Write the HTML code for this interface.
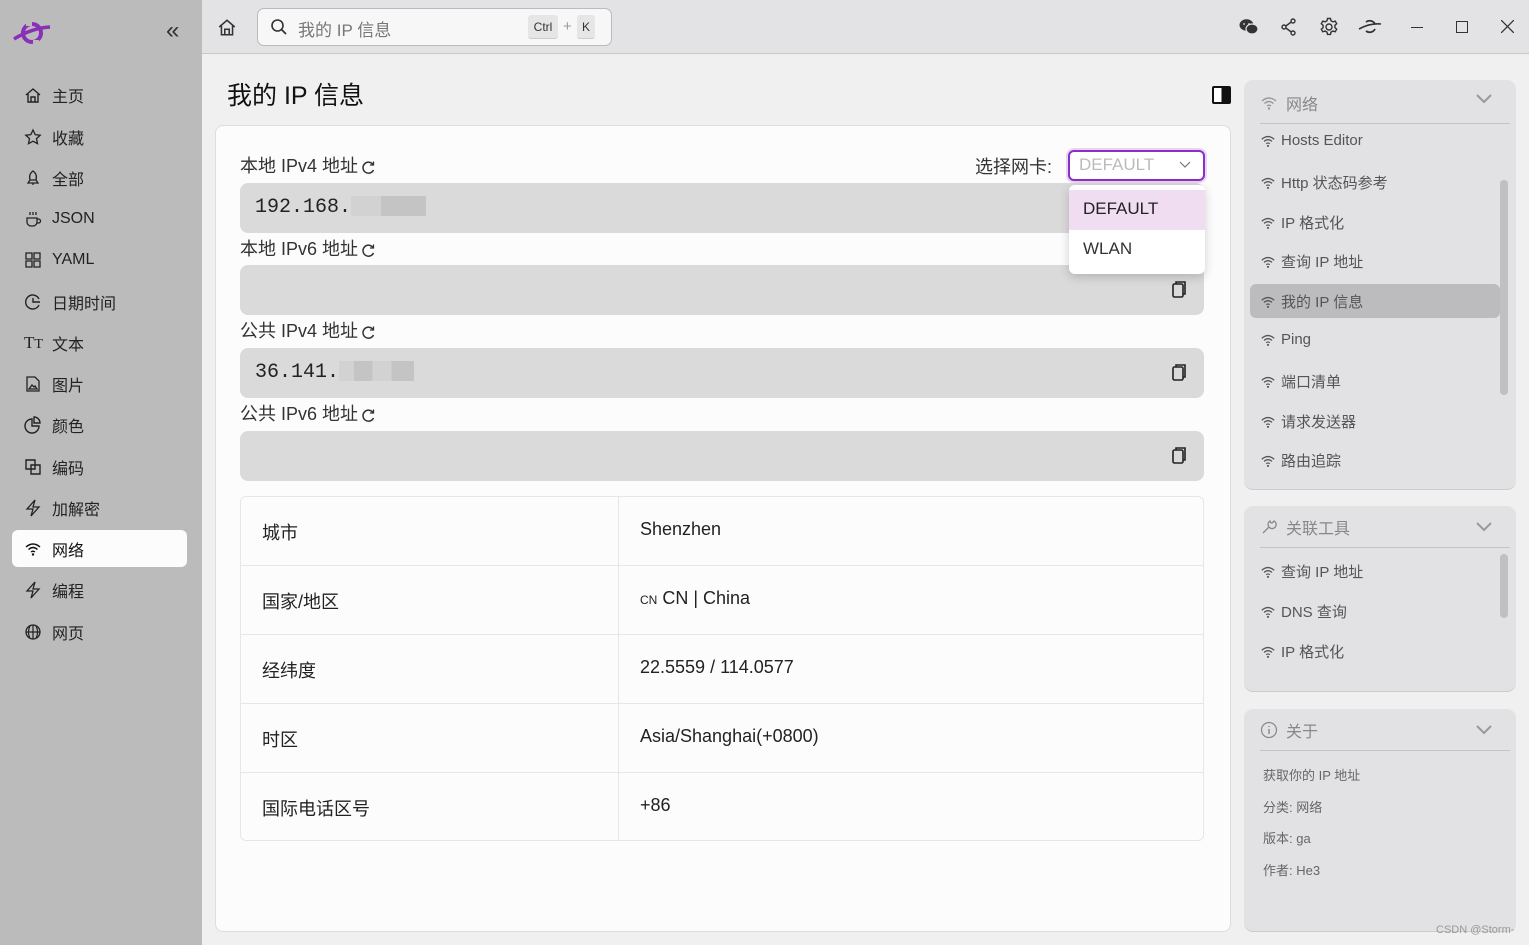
<!DOCTYPE html>
<html><head><meta charset="utf-8"><style>
*{box-sizing:border-box;margin:0;padding:0}
body{width:1529px;height:945px;overflow:hidden;background:#f0f0f0;font-family:"Liberation Sans","Noto Sans CJK SC",sans-serif;color:#222;position:relative}
.abs{position:absolute}
.side{left:0;top:0;width:202px;height:945px;background:#bbbbbb}
.nav{position:absolute;left:24px;font-size:16px;color:#222;display:flex;align-items:center;gap:10px;height:20px}
.nav svg{width:18px;height:18px}
.top{left:202px;top:0;width:1327px;height:54px;background:#e3e3e5;border-bottom:1px solid #c8c8c8}
.search{left:257px;top:8px;width:355px;height:38px;background:#f7f7f8;border:1px solid #bbb;border-radius:7px}
.card{left:215px;top:125px;width:1016px;height:807px;background:#fcfcfd;border:1px solid #ddd;border-radius:8px}
.lbl{position:absolute;font-size:18px;color:#333}
.rf{display:inline-block;width:14px;height:14px;vertical-align:-2px;margin-left:3px}
.inp{position:absolute;left:240px;width:964px;height:50px;background:#dadada;border-radius:8px;font-family:"Liberation Mono",monospace;font-size:20px;padding:13px 0 0 15px;color:#222}
.copy{position:absolute;right:16px;top:14px}
.tbl{left:240px;top:496px;width:964px;height:345px;border:1px solid #e6e6e6;border-radius:6px;background:#fcfcfd}
.row{position:absolute;left:0;width:962px;height:69px;border-bottom:1px solid #e6e6e6;font-size:18px}
.row span{position:absolute;top:22px}
.box{position:absolute;left:1244px;width:272px;background:#e2e2e4;border-radius:9px;border-bottom:1px solid #ccc}
.bh{position:absolute;left:16px;width:250px;height:42px;border-bottom:1px solid #c4c4c4;font-size:16px;color:#888;display:flex;align-items:center;gap:8px;padding-left:0}
.it{position:absolute;left:16px;font-size:15px;color:#555;display:flex;align-items:center;gap:5px}
.ab{position:absolute;left:19px;font-size:13px;color:#666}
.chev{position:absolute;right:24px;top:14px}
</style></head><body>
<div class="abs side"></div>
<svg class="abs" style="left:12px;top:18px" width="40" height="30" viewBox="0 0 40 30"><ellipse cx="20" cy="15" rx="9" ry="9" fill="none" stroke="#8a2fb8" stroke-width="4"/><path d="M2 21 Q20 10 38 9" stroke="#8a2fb8" stroke-width="3.5" fill="none"/><rect x="14" y="3" width="6" height="5" fill="#bbb"/><rect x="21" y="22" width="6" height="5" fill="#bbb"/></svg>
<div class="abs" style="left:166px;top:17px;font-size:24px;color:#333">«</div>
<svg width="0" height="0" style="position:absolute"><defs>
<g id="wifi"><path d="M2 7 Q9 1 16 7 M4.5 9.5 Q9 5.5 13.5 9.5 M7 12 Q9 10.5 11 12" fill="none" stroke="currentColor" stroke-width="1.4"/><circle cx="9" cy="14.5" r="1.2" fill="currentColor"/></g>
<g id="copy"><rect x="4" y="5" width="10" height="13" rx="1.5" fill="none" stroke="#222" stroke-width="1.6"/><path d="M7 5V3h9v12h-2" fill="none" stroke="#222" stroke-width="1.6"/></g>
<g id="rf"><path d="M12 4.5A5.5 5.5 0 1 0 12.5 10" fill="none" stroke="#333" stroke-width="1.5"/><path d="M12.5 1.5v3.5H9" fill="none" stroke="#333" stroke-width="1.3"/></g>
</defs></svg>
<div class="nav" style="top:85px"><svg viewBox="0 0 18 18"><path d="M2 9L9 3l7 6M4 8v8h10V8M7 16v-5h4v5" fill="none" stroke="#222" stroke-width="1.4"/></svg>主页</div>
<div class="nav" style="top:127px"><svg viewBox="0 0 18 18"><path d="M9 2l2.2 4.6 5 .6-3.7 3.4 1 5L9 13.2 4.5 15.6l1-5L1.8 7.2l5-.6z" fill="none" stroke="#222" stroke-width="1.3"/></svg>收藏</div>
<div class="nav" style="top:168px"><svg viewBox="0 0 18 18"><path d="M9 2c3 2 4 5 3 9H6C5 7 6 4 9 2zM6 11l-2 3h10l-2-3M9 14v2" fill="none" stroke="#222" stroke-width="1.3"/></svg>全部</div>
<div class="nav" style="top:209px"><svg viewBox="0 0 18 18"><path d="M3 8h10v4a4 4 0 01-4 4H7a4 4 0 01-4-4zM13 9h1.5a2 2 0 010 4H13M6 2v3M9 2v3M12 2v3" fill="none" stroke="#222" stroke-width="1.3"/></svg>JSON</div>
<div class="nav" style="top:250px"><svg viewBox="0 0 18 18"><path d="M2 2h6v6H2zM10 2h6v6h-6zM2 10h6v6H2zM10 10h6v6h-6z" fill="none" stroke="#222" stroke-width="1.3"/></svg>YAML</div>
<div class="nav" style="top:292px"><svg viewBox="0 0 18 18"><path d="M15 6A7 7 0 1015 12M9 5v4h7" fill="none" stroke="#222" stroke-width="1.4"/></svg>日期时间</div>
<div class="nav" style="top:333px"><span style="font-family:'Liberation Serif',serif;font-size:17px;width:18px">T<small>T</small></span>文本</div>
<div class="nav" style="top:374px"><svg viewBox="0 0 18 18"><path d="M3 2h8l4 4v10H3zM5 14l3-4 2 2 1-1 2 3z" fill="none" stroke="#222" stroke-width="1.3"/></svg>图片</div>
<div class="nav" style="top:415px"><svg viewBox="0 0 18 18"><path d="M8 3a7 7 0 107 7H8zM10 1v6h6a6 6 0 00-6-6z" fill="none" stroke="#222" stroke-width="1.4"/></svg>颜色</div>
<div class="nav" style="top:457px"><svg viewBox="0 0 18 18"><path d="M2 2h9v9H2zM7 7h9v9H7z" fill="none" stroke="#222" stroke-width="1.4"/></svg>编码</div>
<div class="nav" style="top:498px"><svg viewBox="0 0 18 18"><path d="M11 1L3 10h6l-2 7 8-9H9z" fill="none" stroke="#222" stroke-width="1.3"/></svg>加解密</div>
<div class="abs" style="left:12px;top:530px;width:175px;height:37px;background:#fcfcfd;border-radius:6px"></div>
<div class="nav" style="top:539px;color:#111"><svg viewBox="0 0 18 18" style="color:#111"><use href="#wifi"/></svg>网络</div>
<div class="nav" style="top:580px"><svg viewBox="0 0 18 18"><path d="M11 1L3 10h6l-2 7 8-9H9z" fill="none" stroke="#222" stroke-width="1.3"/></svg>编程</div>
<div class="nav" style="top:622px"><svg viewBox="0 0 18 18"><circle cx="9" cy="9" r="7" fill="none" stroke="#222" stroke-width="1.3"/><path d="M2 9h14M9 2v14M6 2.8c-2 4-2 8.4 0 12.4M12 2.8c2 4 2 8.4 0 12.4" fill="none" stroke="#222" stroke-width="1.2"/></svg>网页</div>

<div class="abs top"></div>
<svg class="abs" style="left:217px;top:17px" width="20" height="20" viewBox="0 0 18 18"><path d="M2 9L9 3l7 6M4 8v8h10V8M7 16v-5h4v5" fill="none" stroke="#333" stroke-width="1.4"/></svg>
<div class="abs search"></div>
<svg class="abs" style="left:270px;top:18px" width="18" height="18" viewBox="0 0 18 18"><circle cx="7.5" cy="7.5" r="5.5" fill="none" stroke="#333" stroke-width="1.6"/><path d="M11.5 11.5L16 16" stroke="#333" stroke-width="1.8"/></svg>
<div class="abs" style="left:298px;top:16px;font-size:17px;color:#777">我的 IP 信息</div>
<div class="abs" style="left:528px;top:15px;width:30px;height:24px;background:#e6e6e6;border-radius:3px;font-size:12px;color:#333;text-align:center;line-height:24px;border-bottom:1px solid #ccc">Ctrl</div>
<div class="abs" style="left:563px;top:18px;font-size:15px;color:#999">+</div>
<div class="abs" style="left:577px;top:15px;width:18px;height:24px;background:#e6e6e6;border-radius:3px;font-size:12px;color:#333;text-align:center;line-height:24px;border-bottom:1px solid #ccc">K</div>
<svg class="abs" style="left:1239px;top:18px" width="20" height="18" viewBox="0 0 20 18"><ellipse cx="7.5" cy="7" rx="7" ry="5.7" fill="#333"/><ellipse cx="13" cy="11" rx="6" ry="5" fill="#333" stroke="#e3e3e5" stroke-width="1.2"/><circle cx="5" cy="6" r=".9" fill="#e3e3e5"/><circle cx="10" cy="6" r=".9" fill="#e3e3e5"/></svg>
<svg class="abs" style="left:1281px;top:18px" width="16" height="18" viewBox="0 0 16 18"><circle cx="12" cy="3" r="2" fill="none" stroke="#333" stroke-width="1.4"/><circle cx="3" cy="9" r="2" fill="none" stroke="#333" stroke-width="1.4"/><circle cx="12" cy="15" r="2" fill="none" stroke="#333" stroke-width="1.4"/><path d="M4.8 8l5.5-4M4.8 10l5.5 4" stroke="#333" stroke-width="1.4"/></svg>
<svg class="abs" style="left:1319px;top:17px" width="20" height="20" viewBox="0 0 20 20"><path d="M8.5 1.5h3l.5 2.3 2 1.1 2.2-.8 1.5 2.6-1.8 1.6v2.3l1.8 1.6-1.5 2.6-2.2-.8-2 1.1-.5 2.3h-3l-.5-2.3-2-1.1-2.2.8-1.5-2.6 1.8-1.6V8.3L2.3 6.7l1.5-2.6 2.2.8 2-1.1z" fill="none" stroke="#333" stroke-width="1.4"/><circle cx="10" cy="10" r="3" fill="none" stroke="#333" stroke-width="1.4"/></svg>
<svg class="abs" style="left:1358px;top:18px" width="24" height="18" viewBox="0 0 24 18"><path d="M1 11Q12 5 23 6" stroke="#333" stroke-width="1.6" fill="none"/><path d="M8 4a6 6 0 019 2M17 11a6 6 0 01-9 2" stroke="#333" stroke-width="1.8" fill="none"/></svg>
<div class="abs" style="left:1411px;top:27px;width:12px;height:1.3px;background:#333"></div>
<div class="abs" style="left:1456px;top:21px;width:12px;height:12px;border:1.3px solid #333"></div>
<svg class="abs" style="left:1501px;top:20px" width="13" height="13"><path d="M0 0L13 13M13 0L0 13" stroke="#333" stroke-width="1.3"/></svg>

<div class="abs" style="left:227px;top:76px;font-size:25px;color:#111">我的 IP 信息</div>
<div class="abs" style="left:1212px;top:86px;width:19px;height:18px;border:2px solid #111;border-radius:2px;background:linear-gradient(90deg,#fff 50%,#111 50%)"></div>

<div class="abs card"></div>
<div class="lbl" style="left:240px;top:152px">本地 IPv4 地址<svg class="rf" viewBox="0 0 14 14"><use href="#rf"/></svg></div>
<div class="inp" style="top:183px">192.168.<span style="display:inline-block;width:75px;height:20px;background:linear-gradient(90deg,#d2d2d2 40%,#c4c4c4 40%);vertical-align:-4px"></span></div>
<div class="lbl" style="left:240px;top:235px">本地 IPv6 地址<svg class="rf" viewBox="0 0 14 14"><use href="#rf"/></svg></div>
<div class="inp" style="top:265px"><svg class="copy" width="20" height="20" viewBox="0 0 18 20"><use href="#copy"/></svg></div>
<div class="lbl" style="left:240px;top:317px">公共 IPv4 地址<svg class="rf" viewBox="0 0 14 14"><use href="#rf"/></svg></div>
<div class="inp" style="top:348px">36.141.<span style="display:inline-block;width:75px;height:20px;background:linear-gradient(90deg,#d2d2d2 20%,#c4c4c4 20%,#c4c4c4 45%,#d2d2d2 45%,#d2d2d2 70%,#c4c4c4 70%);vertical-align:-4px"></span><svg class="copy" width="20" height="20" viewBox="0 0 18 20"><use href="#copy"/></svg></div>
<div class="lbl" style="left:240px;top:400px">公共 IPv6 地址<svg class="rf" viewBox="0 0 14 14"><use href="#rf"/></svg></div>
<div class="inp" style="top:431px"><svg class="copy" width="20" height="20" viewBox="0 0 18 20"><use href="#copy"/></svg></div>

<div class="lbl" style="left:975px;top:153px">选择网卡:</div>
<div class="abs" style="left:1068px;top:150px;width:137px;height:31px;border:2px solid #8a2fc8;border-radius:6px;background:#fff;box-shadow:0 0 0 2px #e6d6f2;font-size:17px;color:#bbb;padding:3px 0 0 9px">DEFAULT<svg style="position:absolute;right:12px;top:9px" width="12" height="8"><path d="M1 1l5 5 5-5" fill="none" stroke="#777" stroke-width="1.2"/></svg></div>
<div class="abs" style="left:1069px;top:185px;width:136px;height:89px;background:#fff;border-radius:6px;box-shadow:0 3px 10px rgba(0,0,0,.18);overflow:hidden">
<div style="margin-top:5px;height:40px;background:#f0ddf1;font-size:17px;color:#222;padding:9px 0 0 14px">DEFAULT</div>
<div style="height:40px;font-size:17px;color:#333;padding:9px 0 0 14px">WLAN</div></div>

<div class="abs tbl">
<div class="row" style="top:0"><span style="left:21px">城市</span><span style="left:399px">Shenzhen</span></div>
<div class="row" style="top:69px"><span style="left:21px">国家/地区</span><span style="left:399px"><small style="font-size:12px">CN</small> CN | China</span></div>
<div class="row" style="top:138px"><span style="left:21px">经纬度</span><span style="left:399px">22.5559 / 114.0577</span></div>
<div class="row" style="top:207px"><span style="left:21px">时区</span><span style="left:399px">Asia/Shanghai(+0800)</span></div>
<div class="row" style="top:276px;border-bottom:none"><span style="left:21px">国际电话区号</span><span style="left:399px">+86</span></div>
<div style="position:absolute;left:377px;top:0;width:1px;height:343px;background:#e6e6e6"></div>
</div>

<div class="box" style="top:80px;height:410px">
<div class="bh" style="top:2px"><svg width="18" height="18" viewBox="0 0 18 18" style="color:#999"><use href="#wifi"/></svg> 网络</div>
<svg class="chev" width="16" height="10"><path d="M1 1l7 7 7-7" fill="none" stroke="#999" stroke-width="2"/></svg>
<div style="position:absolute;left:6px;top:204px;width:250px;height:34px;background:#bcbcbe;border-radius:6px"></div>
<div style="position:absolute;left:256px;top:100px;width:8px;height:215px;background:#c0c0c0;border-radius:4px"></div>
</div>
<div class="it" style="left:1260px;top:132px"><svg width="16" height="16" viewBox="0 0 18 18" style="color:#555"><use href="#wifi"/></svg>Hosts Editor</div>
<div class="it" style="left:1260px;top:172px"><svg width="16" height="16" viewBox="0 0 18 18" style="color:#555"><use href="#wifi"/></svg>Http 状态码参考</div>
<div class="it" style="left:1260px;top:212px"><svg width="16" height="16" viewBox="0 0 18 18" style="color:#555"><use href="#wifi"/></svg>IP 格式化</div>
<div class="it" style="left:1260px;top:251px"><svg width="16" height="16" viewBox="0 0 18 18" style="color:#555"><use href="#wifi"/></svg>查询 IP 地址</div>
<div class="it" style="left:1260px;top:291px"><svg width="16" height="16" viewBox="0 0 18 18" style="color:#555"><use href="#wifi"/></svg>我的 IP 信息</div>
<div class="it" style="left:1260px;top:331px"><svg width="16" height="16" viewBox="0 0 18 18" style="color:#555"><use href="#wifi"/></svg>Ping</div>
<div class="it" style="left:1260px;top:371px"><svg width="16" height="16" viewBox="0 0 18 18" style="color:#555"><use href="#wifi"/></svg>端口清单</div>
<div class="it" style="left:1260px;top:411px"><svg width="16" height="16" viewBox="0 0 18 18" style="color:#555"><use href="#wifi"/></svg>请求发送器</div>
<div class="it" style="left:1260px;top:450px"><svg width="16" height="16" viewBox="0 0 18 18" style="color:#555"><use href="#wifi"/></svg>路由追踪</div>

<div class="box" style="top:506px;height:186px">
<div class="bh" style="top:0"><svg width="18" height="18" viewBox="0 0 18 18"><path d="M3 15l6-6M9 9a4 4 0 105-6l-2 2-1.5-.5L10 3a4 4 0 00-1 6z" fill="none" stroke="#888" stroke-width="1.3"/></svg> 关联工具</div>
<svg class="chev" style="top:16px" width="16" height="10"><path d="M1 1l7 7 7-7" fill="none" stroke="#999" stroke-width="2"/></svg>
<div style="position:absolute;left:256px;top:48px;width:8px;height:64px;background:#c0c0c0;border-radius:4px"></div>
</div>
<div class="it" style="left:1260px;top:561px"><svg width="16" height="16" viewBox="0 0 18 18" style="color:#555"><use href="#wifi"/></svg>查询 IP 地址</div>
<div class="it" style="left:1260px;top:601px"><svg width="16" height="16" viewBox="0 0 18 18" style="color:#555"><use href="#wifi"/></svg>DNS 查询</div>
<div class="it" style="left:1260px;top:641px"><svg width="16" height="16" viewBox="0 0 18 18" style="color:#555"><use href="#wifi"/></svg>IP 格式化</div>

<div class="box" style="top:709px;height:223px">
<div class="bh" style="top:0"><svg width="18" height="18" viewBox="0 0 18 18"><circle cx="9" cy="9" r="7.5" fill="none" stroke="#888" stroke-width="1.2"/><path d="M9 8v5M9 5v1" stroke="#888" stroke-width="1.4"/></svg> 关于</div>
<svg class="chev" style="top:16px" width="16" height="10"><path d="M1 1l7 7 7-7" fill="none" stroke="#999" stroke-width="2"/></svg>
<div class="ab" style="top:56px">获取你的 IP 地址</div>
<div class="ab" style="top:88px">分类: 网络</div>
<div class="ab" style="top:119px">版本: ga</div>
<div class="ab" style="top:151px">作者: He3</div>
</div>
<div class="abs" style="left:1436px;top:924px;font-size:11px;color:#999">CSDN @Storm-</div>
</body></html>
